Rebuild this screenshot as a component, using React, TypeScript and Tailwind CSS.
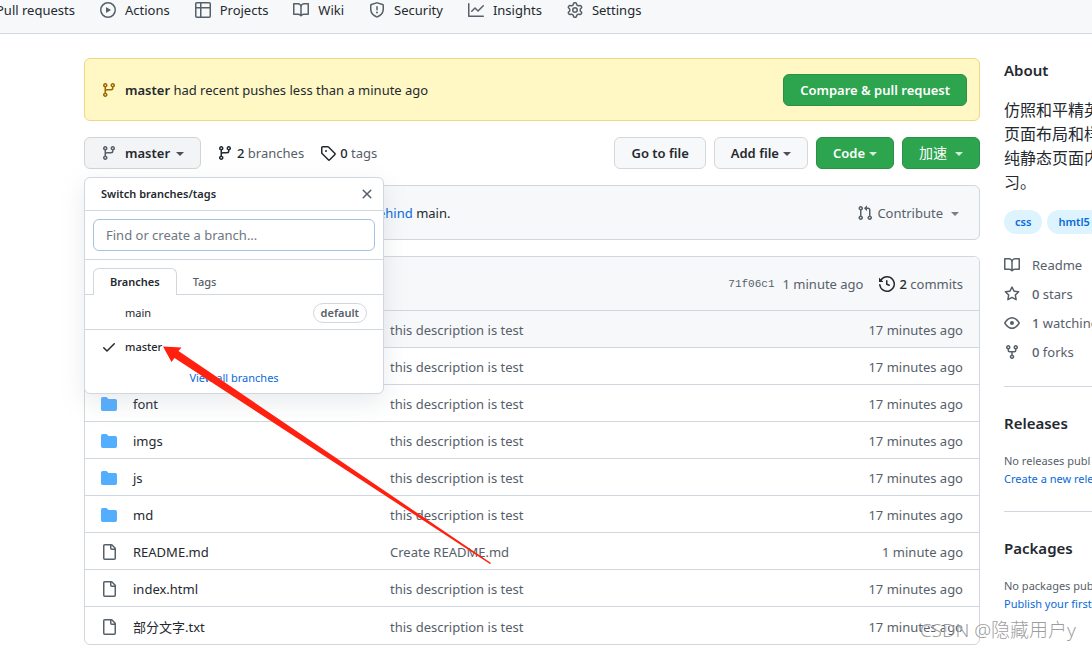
import { useState } from 'react';

const PATHS = {
  play: 'M1.5 8a6.5 6.5 0 1113 0 6.5 6.5 0 01-13 0zM8 0a8 8 0 100 16A8 8 0 008 0zM6.379 5.227A.25.25 0 006 5.442v5.117a.25.25 0 00.379.214l4.264-2.559a.25.25 0 000-.428L6.379 5.227z',
  table: 'M0 1.75C0 .784.784 0 1.75 0h12.5C15.216 0 16 .784 16 1.75v12.5A1.75 1.75 0 0 1 14.25 16H1.75A1.75 1.75 0 0 1 0 14.25ZM6.5 6.5v8h7.75a.25.25 0 0 0 .25-.25V6.5Zm8-1.5V1.75a.25.25 0 0 0-.25-.25H6.5V5Zm-13 1.5v7.75c0 .138.112.25.25.25H5v-8ZM5 5V1.5H1.75a.25.25 0 0 0-.25.25V5Z',
  book: 'M0 1.75A.75.75 0 01.75 1h4.253c1.227 0 2.317.59 3 1.501A3.744 3.744 0 0111.006 1h4.245a.75.75 0 01.75.75v10.5a.75.75 0 01-.75.75h-4.507a2.25 2.25 0 00-1.591.659l-.622.621a.75.75 0 01-1.06 0l-.622-.621A2.25 2.25 0 005.258 13H.75a.75.75 0 01-.75-.75V1.75zm8.755 3a2.25 2.25 0 012.25-2.25H14.5v9h-3.757c-.71 0-1.4.201-1.992.572l.004-7.322zm-1.504 7.324l.004-5.073-.002-2.253A2.25 2.25 0 005.003 2.5H1.5v9h3.757a3.75 3.75 0 011.994.574z',
  shield: 'M7.467.133a1.75 1.75 0 011.066 0l5.25 1.68A1.75 1.75 0 0115 3.48V7c0 1.566-.32 3.182-1.303 4.682-.983 1.498-2.585 2.813-5.032 3.855a1.7 1.7 0 01-1.33 0c-2.447-1.042-4.049-2.357-5.032-3.855C1.32 10.182 1 8.566 1 7V3.48a1.75 1.75 0 011.217-1.667l5.25-1.68zm.61 1.429a.25.25 0 00-.153 0l-5.25 1.68a.25.25 0 00-.174.238V7c0 1.358.275 2.666 1.057 3.86.784 1.194 2.121 2.34 4.366 3.297a.2.2 0 00.154 0c2.245-.956 3.582-2.104 4.366-3.298C13.225 9.666 13.5 8.36 13.5 7V3.48a.25.25 0 00-.174-.237l-5.25-1.68zM9 10.5a1 1 0 11-2 0 1 1 0 012 0zm-.25-5.75a.75.75 0 10-1.5 0v3a.75.75 0 001.5 0v-3z',
  graph: 'M1.5 1.75a.75.75 0 00-1.5 0v12.5c0 .414.336.75.75.75h14.5a.75.75 0 000-1.5H1.5V1.75zm14.28 2.53a.75.75 0 00-1.06-1.06L10 7.94 7.53 5.47a.75.75 0 00-1.06 0L3.22 8.72a.75.75 0 001.06 1.06L7 7.06l2.47 2.47a.75.75 0 001.06 0l5.25-5.25z',
  gear: 'M8 0a8.2 8.2 0 0 1 .701.031C9.444.095 9.99.645 10.16 1.29l.288 1.107c.018.066.079.158.212.224.231.114.454.243.668.386.123.082.233.09.299.071l1.103-.303c.644-.176 1.392.021 1.82.63.27.385.506.792.704 1.218.315.675.111 1.422-.364 1.891l-.814.806c-.049.048-.098.147-.088.294.016.257.016.515 0 .772-.01.147.038.246.088.294l.814.806c.475.469.679 1.216.364 1.891a7.977 7.977 0 0 1-.704 1.217c-.428.61-1.176.807-1.82.63l-1.102-.302c-.067-.019-.177-.011-.3.071a5.909 5.909 0 0 1-.668.386c-.133.066-.194.158-.211.224l-.29 1.106c-.168.646-.715 1.196-1.458 1.26a8.006 8.006 0 0 1-1.402 0c-.743-.064-1.289-.614-1.458-1.26l-.289-1.106c-.018-.066-.079-.158-.212-.224a5.738 5.738 0 0 1-.668-.386c-.123-.082-.233-.09-.299-.071l-1.103.303c-.644.176-1.392-.021-1.82-.63a8.12 8.12 0 0 1-.704-1.218c-.315-.675-.111-1.422.363-1.891l.815-.806c.05-.048.098-.147.088-.294a6.214 6.214 0 0 1 0-.772c.01-.147-.038-.246-.088-.294l-.815-.806C.635 6.045.431 5.298.746 4.623a7.92 7.92 0 0 1 .704-1.217c.428-.61 1.176-.807 1.82-.63l1.102.302c.067.019.177.011.3-.071.214-.143.437-.272.668-.386.133-.066.194-.158.211-.224l.29-1.106C6.009.645 6.556.095 7.299.03 7.53.01 7.764 0 8 0Zm-.571 1.525c-.036.003-.108.036-.137.146l-.289 1.105c-.147.561-.549.967-.998 1.189-.173.086-.34.183-.5.29-.417.278-.97.423-1.529.27l-1.103-.303c-.109-.03-.175.016-.195.045-.22.312-.412.644-.573.99-.014.031-.021.11.059.19l.815.806c.411.406.562.957.53 1.456a4.709 4.709 0 0 0 0 .582c.032.499-.119 1.05-.53 1.456l-.815.806c-.081.08-.073.159-.059.19.162.346.353.677.573.989.02.03.085.076.195.046l1.102-.303c.56-.153 1.113-.008 1.53.27.161.107.328.204.501.29.447.222.85.629.997 1.189l.289 1.105c.029.109.101.143.137.146a6.6 6.6 0 0 0 1.142 0c.036-.003.108-.036.137-.146l.289-1.105c.147-.561.549-.967.998-1.189.173-.086.34-.183.5-.29.417-.278.97-.423 1.529-.27l1.103.303c.109.029.175-.016.195-.045.22-.313.411-.644.573-.99.014-.031.021-.11-.059-.19l-.815-.806c-.411-.406-.562-.957-.53-1.456a4.709 4.709 0 0 0 0-.582c-.032-.499.119-1.05.53-1.456l.815-.806c.081-.08.073-.159.059-.19a6.464 6.464 0 0 0-.573-.989c-.02-.03-.085-.076-.195-.046l-1.102.303c-.56.153-1.113.008-1.53-.27a4.44 4.44 0 0 0-.501-.29c-.447-.222-.85-.629-.997-1.189l-.289-1.105c-.029-.11-.101-.143-.137-.146a6.6 6.6 0 0 0-1.142 0ZM11 8a3 3 0 1 1-6 0 3 3 0 0 1 6 0ZM9.5 8a1.5 1.5 0 1 0-3.001.001A1.5 1.5 0 0 0 9.5 8Z',
  branch: 'M9.5 3.25a2.25 2.25 0 1 1 3 2.122V6A2.5 2.5 0 0 1 10 8.5H6a1 1 0 0 0-1 1v1.128a2.251 2.251 0 1 1-1.5 0V5.372a2.25 2.25 0 1 1 1.5 0v1.836A2.493 2.493 0 0 1 6 7h4a1 1 0 0 0 1-1v-.628A2.25 2.25 0 0 1 9.5 3.25Zm-6 0a.75.75 0 1 0 1.5 0 .75.75 0 0 0-1.5 0Zm8.25-.75a.75.75 0 1 0 0 1.5.75.75 0 0 0 0-1.5ZM4.25 12a.75.75 0 1 0 0 1.5.75.75 0 0 0 0-1.5Z',
  tag: 'M2.5 7.775V2.75a.25.25 0 01.25-.25h5.025a.25.25 0 01.177.073l6.25 6.25a.25.25 0 010 .354l-5.025 5.025a.25.25 0 01-.354 0l-6.25-6.25a.25.25 0 01-.073-.177zm-1.5 0V2.75C1 1.784 1.784 1 2.75 1h5.025c.464 0 .91.184 1.238.513l6.25 6.25a1.75 1.75 0 010 2.474l-5.026 5.026a1.75 1.75 0 01-2.474 0l-6.25-6.25A1.75 1.75 0 011 7.775zM6 5a1 1 0 100 2 1 1 0 000-2z',
  x: 'M3.72 3.72a.75.75 0 011.06 0L8 6.94l3.22-3.22a.75.75 0 111.06 1.06L9.06 8l3.22 3.22a.75.75 0 11-1.06 1.06L8 9.06l-3.22 3.22a.75.75 0 01-1.06-1.06L6.94 8 3.72 4.78a.75.75 0 010-1.06z',
  check: 'M13.78 4.22a.75.75 0 010 1.06l-7.25 7.25a.75.75 0 01-1.06 0L2.22 9.28a.75.75 0 011.06-1.06L6 10.94l6.72-6.72a.75.75 0 011.06 0z',
  pull: 'M7.177 3.073L9.573.677A.25.25 0 0110 .854v4.792a.25.25 0 01-.427.177L7.177 3.427a.25.25 0 010-.354zM3.75 2.5a.75.75 0 100 1.5.75.75 0 000-1.5zm-2.25.75a2.25 2.25 0 113 2.122v5.256a2.251 2.251 0 11-1.5 0V5.372A2.25 2.25 0 011.5 3.25zM11 2.5h-1V4h1a1 1 0 011 1v5.628a2.251 2.251 0 101.5 0V5A2.5 2.5 0 0011 2.5zm1 10.25a.75.75 0 111.5 0 .75.75 0 01-1.5 0zM3.75 12a.75.75 0 100 1.5.75.75 0 000-1.5z',
  history: 'M1.643 3.143L.427 1.927A.25.25 0 000 2.104V5.75c0 .138.112.25.25.25h3.646a.25.25 0 00.177-.427L2.715 4.215a6.5 6.5 0 11-1.18 4.458.75.75 0 10-1.493.154 8.001 8.001 0 101.6-5.684zM7.75 4a.75.75 0 01.75.75v2.992l2.028.812a.75.75 0 01-.557 1.392l-2.5-1A.75.75 0 017 8.25v-3.5A.75.75 0 017.75 4z',
  folder: 'M1.75 1A1.75 1.75 0 000 2.75v10.5C0 14.216.784 15 1.75 15h12.5A1.75 1.75 0 0016 13.25v-8.5A1.75 1.75 0 0014.25 3H7.5a.25.25 0 01-.2-.1l-.9-1.2C6.07 1.26 5.55 1 5 1H1.75z',
  file: 'M3.75 1.5a.25.25 0 00-.25.25v12.5c0 .138.112.25.25.25h9.5a.25.25 0 00.25-.25V6h-2.75A1.75 1.75 0 019 4.25V1.5H3.75zm6.75.062V4.25c0 .138.112.25.25.25h2.688a.252.252 0 00-.011-.013l-2.914-2.914a.272.272 0 00-.013-.011zM2 1.75C2 .784 2.784 0 3.75 0h6.586c.464 0 .909.184 1.237.513l2.914 2.914c.329.328.513.773.513 1.237v9.586A1.75 1.75 0 0113.25 16h-9.5A1.75 1.75 0 012 14.25V1.75z',
  star: 'M8 .25a.75.75 0 01.673.418l1.882 3.815 4.21.612a.75.75 0 01.416 1.279l-3.046 2.97.719 4.192a.75.75 0 01-1.088.791L8 12.347l-3.766 1.98a.75.75 0 01-1.088-.79l.72-4.194L.818 6.374a.75.75 0 01.416-1.28l4.21-.611L7.327.668A.75.75 0 018 .25zm0 2.445L6.615 5.5a.75.75 0 01-.564.41l-3.097.45 2.24 2.184a.75.75 0 01.216.664l-.528 3.084 2.769-1.456a.75.75 0 01.698 0l2.77 1.456-.53-3.084a.75.75 0 01.216-.664l2.24-2.183-3.096-.45a.75.75 0 01-.564-.41L8 2.694v.001z',
  eye: 'M8 2c1.981 0 3.671.992 4.933 2.078 1.27 1.091 2.187 2.345 2.637 3.023a1.62 1.62 0 0 1 0 1.798c-.45.678-1.367 1.932-2.637 3.023C11.67 13.008 9.981 14 8 14c-1.981 0-3.671-.992-4.933-2.078C1.797 10.83.88 9.576.43 8.898a1.62 1.62 0 0 1 0-1.798c.45-.677 1.367-1.931 2.637-3.022C4.33 2.992 6.019 2 8 2ZM1.679 7.932a.12.12 0 0 0 0 .136c.411.622 1.241 1.75 2.366 2.717C5.176 11.758 6.527 12.5 8 12.5c1.473 0 2.825-.742 3.955-1.715 1.124-.967 1.954-2.096 2.366-2.717a.12.12 0 0 0 0-.136c-.412-.621-1.242-1.75-2.366-2.717C10.824 4.242 9.473 3.5 8 3.5c-1.473 0-2.825.742-3.955 1.715-1.124.967-1.954 2.096-2.366 2.717ZM8 10a2 2 0 1 1-.001-3.999A2 2 0 0 1 8 10Z',
  fork: 'M5 3.25a.75.75 0 11-1.5 0 .75.75 0 011.5 0zm0 2.122a2.25 2.25 0 10-1.5 0v.878A2.25 2.25 0 005.75 8.5h1.5v2.128a2.251 2.251 0 101.5 0V8.5h1.5a2.25 2.25 0 002.25-2.25v-.878a2.25 2.25 0 10-1.5 0v.878a.75.75 0 01-.75.75h-4.5A.75.75 0 015 6.25v-.878zm3.75 7.378a.75.75 0 11-1.5 0 .75.75 0 011.5 0zm3-8.75a.75.75 0 100-1.5.75.75 0 000 1.5z',
};

type IconName = keyof typeof PATHS;

function Icon({ name, className = '' }: { name: IconName; className?: string }) {
  return (
    <svg width="16" height="16" viewBox="0 0 16 16" fill="currentColor" fillRule="evenodd" className={`shrink-0 ${className}`} aria-hidden="true">
      <path d={PATHS[name]} />
    </svg>
  );
}

function Caret() {
  return (
    <svg width="8" height="6" viewBox="0 0 8 6" fill="currentColor" className="shrink-0 opacity-80" aria-hidden="true">
      <path d="M0 2h8L4 6z" />
    </svg>
  );
}

const NAV: { label: string; icon: IconName }[] = [
  { label: 'Actions', icon: 'play' },
  { label: 'Projects', icon: 'table' },
  { label: 'Wiki', icon: 'book' },
  { label: 'Security', icon: 'shield' },
  { label: 'Insights', icon: 'graph' },
  { label: 'Settings', icon: 'gear' },
];

const FILES: { name: string; icon: IconName; message: string; time: string }[] = [
  { name: '', icon: 'folder', message: 'this description is test', time: '17 minutes ago' },
  { name: '', icon: 'folder', message: 'this description is test', time: '17 minutes ago' },
  { name: 'font', icon: 'folder', message: 'this description is test', time: '17 minutes ago' },
  { name: 'imgs', icon: 'folder', message: 'this description is test', time: '17 minutes ago' },
  { name: 'js', icon: 'folder', message: 'this description is test', time: '17 minutes ago' },
  { name: 'md', icon: 'folder', message: 'this description is test', time: '17 minutes ago' },
  { name: 'README.md', icon: 'file', message: 'Create README.md', time: '1 minute ago' },
  { name: 'index.html', icon: 'file', message: 'this description is test', time: '17 minutes ago' },
  { name: '部分文字.txt', icon: 'file', message: 'this description is test', time: '17 minutes ago' },
];

const STATS: { icon: IconName; count: string; label: string }[] = [
  { icon: 'book', count: '', label: 'Readme' },
  { icon: 'star', count: '0', label: 'stars' },
  { icon: 'eye', count: '1', label: 'watching' },
  { icon: 'fork', count: '0', label: 'forks' },
];

const GREEN = 'flex h-8 items-center rounded-md border border-[#2a8f47] bg-[#2da44e] px-4 text-white';
const GRAY = 'flex h-8 items-center rounded-md border border-[#d5d8da] bg-[#f6f8fa] px-4 font-semibold text-[#24292f]';

function TopNav() {
  return (
    <nav className="h-[34px] overflow-hidden border-b border-[#d0d7de] bg-[#f6f8fa]" aria-label="Repository">
      <ul className="-ml-1 flex h-5 items-center gap-[25px] whitespace-nowrap">
        <li><a href="#pulls">Pull requests</a></li>
        {NAV.map(item => (
          <li key={item.label}>
            <a href={`#${item.label.toLowerCase()}`} className="flex items-center gap-[9px]">
              <Icon name={item.icon} className="text-[#57606a]" />
              {item.label}
            </a>
          </li>
        ))}
      </ul>
    </nav>
  );
}

function BranchMenu({ onClose }: { onClose: () => void }) {
  const [query, setQuery] = useState('');

  return (
    <div className="absolute top-10 left-0 z-10 w-[300px] rounded-md border border-[#d0d7de] bg-white text-[11px] shadow-[0_8px_24px_rgba(140,149,159,0.2)]">
      <div className="flex h-[33px] items-center justify-between border-b border-[#d0d7de] pr-2 pl-4">
        <span className="font-semibold">Switch branches/tags</span>
        <button type="button" aria-label="Close menu" onClick={onClose} className="text-[#57606a]">
          <Icon name="x" />
        </button>
      </div>
      <div className="border-b border-[#d0d7de] p-2">
        <input
          type="text"
          aria-label="Find or create a branch"
          placeholder="Find or create a branch..."
          value={query}
          onChange={e => setQuery(e.target.value)}
          className="block h-8 w-full rounded-md border border-[#a5c2e6] px-3 text-[13px] placeholder-[#6e7781] outline-none"
        />
      </div>
      <div className="flex h-[35px] items-end border-b border-[#d0d7de] px-2" role="tablist">
        <button type="button" role="tab" aria-selected="true" className="-mb-px h-[27px] rounded-t-md border border-b-0 border-[#d0d7de] bg-white px-4 font-semibold">
          Branches
        </button>
        <button type="button" role="tab" aria-selected="false" className="h-6 px-4 font-medium text-[#57606a]">
          Tags
        </button>
      </div>
      <button type="button" className="flex h-[35px] w-full items-center justify-between border-b border-[#d0d7de] pt-px pr-4 pl-10">
        main
        <span className="flex h-5 items-center rounded-full border border-[#d0d7de] px-[7px] font-semibold text-[#57606a]">default</span>
      </button>
      <button type="button" className="flex h-[34px] w-full items-center gap-2 px-4 font-medium">
        <Icon name="check" />
        master
      </button>
      <a href="#branches" className="block h-[29px] pt-[6px] text-center leading-4 text-[#0969da]">View all branches</a>
    </div>
  );
}

function Toolbar() {
  const [open, setOpen] = useState(true);

  return (
    <div className="relative mt-4 flex items-center gap-2">
      <button
        type="button"
        onClick={() => setOpen(!open)}
        className="flex h-8 items-center gap-[6px] rounded-md border border-[#d0d4d7] bg-[#f3f4f6] px-4 font-semibold"
      >
        <span className="flex items-center gap-2">
          <Icon name="branch" className="text-[#57606a]" />
          master
        </span>
        <Caret />
      </button>
      <a href="#branches" className="ml-2 flex items-center gap-1">
        <Icon name="branch" />
        <span className="text-[#57606a]"><strong className="font-medium text-[#24292f]">2</strong> branches</span>
      </a>
      <a href="#tags" className="ml-2 flex items-center gap-1">
        <Icon name="tag" />
        <span className="text-[#57606a]"><strong className="font-medium text-[#24292f]">0</strong> tags</span>
      </a>
      <div className="ml-auto flex gap-2">
        <button type="button" className={GRAY}>Go to file</button>
        <button type="button" className={`${GRAY} gap-1`}>Add file <Caret /></button>
        <button type="button" className={`${GREEN} gap-1 font-semibold`}>Code <Caret /></button>
        <button type="button" className={`${GREEN} gap-2 text-sm`}>加速 <Caret /></button>
      </div>
      {open && <BranchMenu onClose={() => setOpen(false)} />}
    </div>
  );
}

function FileList() {
  return (
    <div className="mt-4 overflow-hidden rounded-md border border-[#d0d7de]">
      <div className="flex h-[54px] items-center justify-end gap-2 border-b border-[#d0d7de] bg-[#f6f8fa] px-4 pt-px text-[#57606a]">
        <a href="#commit" className="font-['Liberation_Mono',monospace] text-[11px]">71f06c1</a>
        <span>1 minute ago</span>
        <a href="#commits" className="ml-2 flex items-center gap-1">
          <Icon name="history" className="text-[#24292f]" />
          <span><strong className="font-medium text-[#24292f]">2</strong> commits</span>
        </a>
      </div>
      <table className="w-full table-fixed border-separate border-spacing-0">
        <tbody>
          {FILES.map((file, i) => (
            <tr key={i} className="h-[37px] first:bg-[#f6f8fa] [&>td]:border-b [&>td]:border-[#d0d7de] [&>td]:pt-0.5 last:[&>td]:border-b-0">
              <td className="w-[305px] pl-4">
                <div className="flex items-center gap-4">
                  <Icon name={file.icon} className={file.icon === 'folder' ? 'text-[#54aeff]' : 'text-[#57606a]'} />
                  {file.name}
                </div>
              </td>
              <td className="text-[#57606a]">{file.message}</td>
              <td className="w-40 pr-4 text-right text-[#57606a]">{file.time}</td>
            </tr>
          ))}
        </tbody>
      </table>
    </div>
  );
}

function Sidebar() {
  return (
    <aside className="w-[88px] shrink-0 overflow-hidden whitespace-nowrap">
      <h2 className="text-[15px] leading-6 font-semibold">About</h2>
      <p className="mt-4 text-base leading-6">
        仿照和平精英<br />页面布局和样<br />纯静态页面内<br />习。
      </p>
      <div className="mt-4 flex gap-[5px] text-[11px] font-semibold text-[#0969da]">
        <a href="#css" className="flex h-6 shrink-0 items-center rounded-full bg-[#ddf4ff] px-[11px]">css</a>
        <a href="#hmtl5" className="flex h-6 shrink-0 items-center rounded-full bg-[#ddf4ff] px-[11px]">hmtl5</a>
      </div>
      <ul className="mt-4 text-[#57606a]">
        {STATS.map(s => (
          <li key={s.label} className="flex h-[29px] items-center gap-3">
            <Icon name={s.icon} />
            <span>{s.count && <strong className="font-medium">{s.count} </strong>}{s.label}</span>
          </li>
        ))}
      </ul>
      <div className="mt-5 border-t border-[#d0d7de] pt-6">
        <h2 className="text-[15px] leading-6 font-semibold">Releases</h2>
        <p className="mt-[17px] text-[11px] leading-[18px] text-[#57606a]">
          No releases publ<br /><a href="#new-release" className="text-[#0969da]">Create a new rele</a>
        </p>
      </div>
      <div className="mt-[23px] border-t border-[#d0d7de] pt-6">
        <h2 className="text-[15px] leading-6 font-semibold">Packages</h2>
        <p className="mt-[17px] text-[11px] leading-[18px] text-[#57606a]">
          No packages pub<br /><a href="#new-package" className="text-[#0969da]">Publish your first</a>
        </p>
      </div>
    </aside>
  );
}

export default function App() {
  return (
    <div className="relative overflow-hidden bg-white font-['Noto_Sans','Noto_Sans_CJK_SC',sans-serif] text-[13px] leading-5 text-[#24292f]">
      <TopNav />
      <div className="flex gap-6 pt-6 pl-[84px]">
        <main className="min-w-0 flex-1">
          <div className="flex h-[63px] items-center justify-between rounded-md border border-[#eed888] bg-[#fff8c5] pt-px pr-3 pl-4">
            <p className="flex items-center gap-2">
              <Icon name="branch" className="text-[#9a6700]" />
              <span><strong className="font-semibold">master</strong> had recent pushes less than a minute ago</span>
            </p>
            <button type="button" className={`${GREEN} font-semibold`}>Compare &amp; pull request</button>
          </div>
          <Toolbar />
          <div className="mt-4 flex h-[55px] items-center justify-between rounded-md border border-[#d0d7de] bg-[#f6f8fa] pr-5 pl-[285px]">
            <p><a href="#compare" className="text-[#0969da]">behind</a> main.</p>
            <button type="button" className="flex items-center gap-1 text-[#57606a]">
              <Icon name="pull" />
              <span className="mr-1">Contribute</span>
              <Caret />
            </button>
          </div>
          <FileList />
        </main>
        <Sidebar />
      </div>

      {/* Arrow pointing at the checked branch */}
      <svg className="pointer-events-none absolute top-[346px] left-[163px] z-20" width="330" height="220" viewBox="163 346 330 220" aria-hidden="true">
        <path d="M163 346.5 181.500 347.500 178.500 351 491 563 490 564 174.500 358 171.500 362Z" fill="#ff2010" />
      </svg>

      <span className="pointer-events-none absolute top-[618px] right-4 z-20 text-[19px] leading-6 font-light text-[#8c8c8c]/85 [text-shadow:1px_1px_0_rgba(255,255,255,0.8)]">
        CSDN @隐藏用户y
      </span>
    </div>
  );
}
